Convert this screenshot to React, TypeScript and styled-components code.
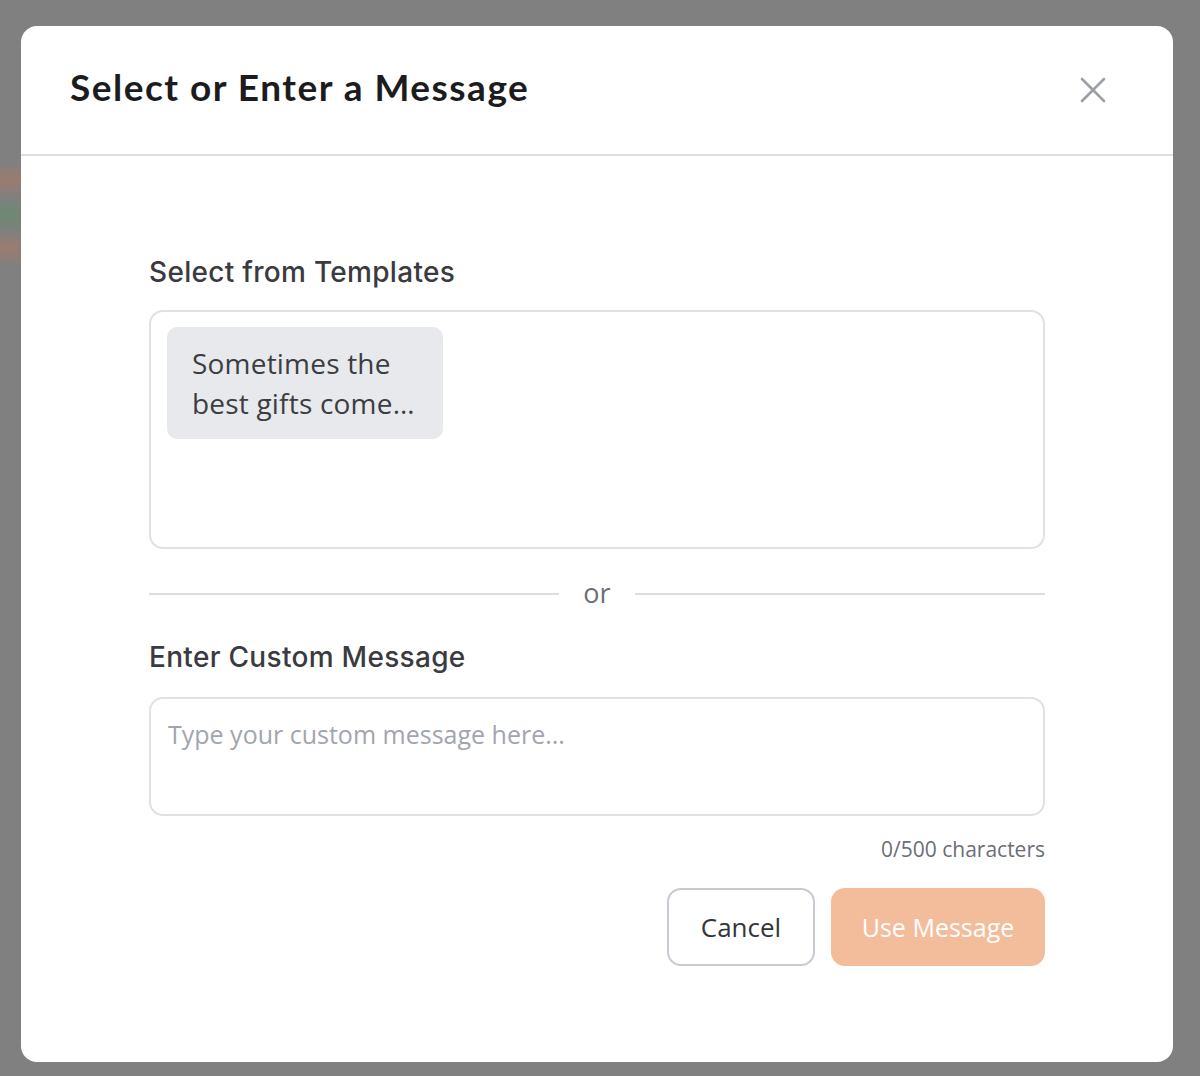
import React, { useState } from "react";
import styled, { createGlobalStyle } from "styled-components";

const Global = createGlobalStyle`
  html, body { margin: 0; padding: 0; }
  body { font-family: "Open Sans", "Liberation Sans", sans-serif; background: #ffffff; }
  * { box-sizing: border-box; }
`;

const Backdrop = styled.div`
  position: fixed;
  inset: 0;
  background: #808080;
  overflow: hidden;
`;

const Ghost = styled.div<{ $top: number; $color: string }>`
  position: absolute;
  left: -20px;
  top: ${(p) => p.$top}px;
  width: 60px;
  height: 20px;
  border-radius: 8px;
  background: ${(p) => p.$color};
  opacity: 0.25;
  filter: blur(6px);
`;

const Stage = styled.div`
  position: relative;
  padding: 26px 27px 14px 21px;
`;

const Dialog = styled.div`
  background: #ffffff;
  border-radius: 16px;
  width: 1152px;
  height: 1036px;
  display: flex;
  flex-direction: column;
  overflow: hidden;
`;

const Header = styled.header`
  height: 130px;
  border-bottom: 2px solid #dedee3;
  display: flex;
  align-items: center;
  justify-content: space-between;
  padding: 0 63px 0 49px;
`;

const Title = styled.h2`
  margin: 0;
  margin-top: -8px;
  font-family: "Lato", "Liberation Sans", sans-serif;
  font-weight: 700;
  font-size: 37px;
  letter-spacing: 1.5px;
  color: #1c1c1f;
`;

const CloseButton = styled.button`
  border: none;
  background: transparent;
  padding: 0;
  width: 34px;
  height: 34px;
  display: flex;
  align-items: center;
  justify-content: center;
  cursor: pointer;
`;

const Body = styled.div`
  padding: 98px 128px 0 128px;
  display: flex;
  flex-direction: column;
`;

const Label = styled.div`
  font-family: "Inter", "Lato", sans-serif;
  font-weight: 500;
  font-size: 28px;
  letter-spacing: 0.3px;
  color: #3a3b40;
  line-height: 36px;
`;

const TemplateBox = styled.div`
  margin-top: 20px;
  height: 239px;
  border: 2px solid #e1e1e5;
  border-radius: 14px;
  padding: 15px 16px;
  display: flex;
  flex-wrap: wrap;
  align-content: flex-start;
  gap: 12px;
`;

const Chip = styled.button`
  width: 276px;
  height: 112px;
  border: none;
  border-radius: 10px;
  background: #e8e9ed;
  padding: 16px 24px 16px 25px;
  text-align: left;
  cursor: pointer;
`;

const ChipText = styled.span`
  font-family: "Open Sans", "Liberation Sans", sans-serif;
  font-size: 28px;
  letter-spacing: 0.2px;
  line-height: 40px;
  color: #3c3d42;
  display: -webkit-box;
  -webkit-line-clamp: 2;
  -webkit-box-orient: vertical;
  overflow: hidden;
`;

const OrRow = styled.div`
  margin-top: 26px;
  display: flex;
  align-items: center;
  gap: 24px;
  height: 38px;
`;

const Rule = styled.div`
  flex: 1;
  height: 2px;
  background: #dcdce1;
`;

const OrText = styled.span`
  font-size: 27px;
  color: #6b6e76;
  line-height: 38px;
  margin-top: -2px;
`;

const CustomLabel = styled(Label)`
  margin-top: 26px;
`;

const TextArea = styled.textarea`
  margin-top: 22px;
  height: 119px;
  width: 100%;
  border: 2px solid #e1e1e5;
  border-radius: 14px;
  padding: 18px 17px;
  font-family: "Open Sans", "Liberation Sans", sans-serif;
  font-size: 25px;
  line-height: 34px;
  color: #3c3d42;
  resize: none;
  outline: none;
  &::placeholder { color: #a2a5ad; }
`;

const Counter = styled.div`
  margin-top: 18px;
  text-align: right;
  font-size: 21px;
  line-height: 30px;
  color: #6b6e76;
`;

const Actions = styled.div`
  margin-top: 24px;
  display: flex;
  justify-content: flex-end;
  gap: 16px;
`;

const Button = styled.button<{ $primary?: boolean }>`
  height: 78px;
  width: ${(p) => (p.$primary ? 214 : 148)}px;
  padding: 0;
  border-radius: 14px;
  font-family: "Open Sans", "Liberation Sans", sans-serif;
  font-size: ${(p) => (p.$primary ? 25 : 26)}px;
  font-weight: 500;
  cursor: pointer;
  border: 2px solid ${(p) => (p.$primary ? "#f3bd9b" : "#c7cad0")};
  background: ${(p) => (p.$primary ? "#f3bd9b" : "#ffffff")};
  color: ${(p) => (p.$primary ? "#ffffff" : "#33353b")};
`;

const CloseIcon = () => (
  <svg width="28" height="28" viewBox="0 0 28 28" fill="none">
    <path d="M3 3L25 25M25 3L3 25" stroke="#9b9fa8" strokeWidth="2.6" strokeLinecap="round" />
  </svg>
);

export default function App() {
  const [text, setText] = useState("");
  return (
    <>
      <Global />
      <Backdrop>
        <Ghost $top={170} $color="#e07040" />
        <Ghost $top={205} $color="#40a050" />
        <Ghost $top={238} $color="#e07040" />
        <Stage>
          <Dialog role="dialog">
            <Header>
              <Title>Select or Enter a Message</Title>
              <CloseButton aria-label="Close">
                <CloseIcon />
              </CloseButton>
            </Header>
            <Body>
              <Label>Select from Templates</Label>
              <TemplateBox>
                <Chip>
                  <ChipText>Sometimes the best gifts come in small packages</ChipText>
                </Chip>
              </TemplateBox>
              <OrRow>
                <Rule />
                <OrText>or</OrText>
                <Rule />
              </OrRow>
              <CustomLabel>Enter Custom Message</CustomLabel>
              <TextArea
                placeholder="Type your custom message here..."
                value={text}
                maxLength={500}
                onChange={(e) => setText(e.target.value)}
              />
              <Counter>{text.length}/500 characters</Counter>
              <Actions>
                <Button>Cancel</Button>
                <Button $primary>Use Message</Button>
              </Actions>
            </Body>
          </Dialog>
        </Stage>
      </Backdrop>
    </>
  );
}
